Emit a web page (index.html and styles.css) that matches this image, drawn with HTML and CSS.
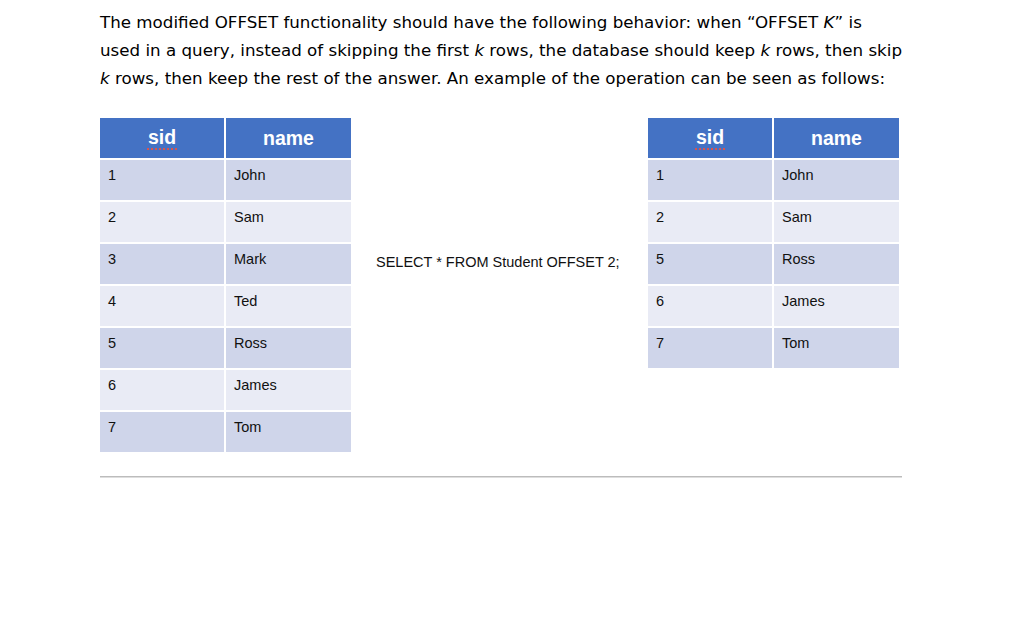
FILE: index.html
```html
<!DOCTYPE html>
<html>
<head>
<meta charset="utf-8">
<link rel="stylesheet" href="styles.css">
</head>
<body>
<div class="page">
  <p class="intro">The modified OFFSET functionality should have the following behavior: when “OFFSET <i>K</i>” is<br>used in a query, instead of skipping the first <i>k</i> rows, the database should keep <i>k</i> rows, then skip<br><i>k</i> rows, then keep the rest of the answer. An example of the operation can be seen as follows:</p>
  <div class="example">
    <div class="tbl">
      <div class="th"><span class="spell">sid</span></div><div class="th">name</div>
      <div class="td odd">1</div><div class="td odd">John</div>
      <div class="td even">2</div><div class="td even">Sam</div>
      <div class="td odd">3</div><div class="td odd">Mark</div>
      <div class="td even">4</div><div class="td even">Ted</div>
      <div class="td odd">5</div><div class="td odd">Ross</div>
      <div class="td even">6</div><div class="td even">James</div>
      <div class="td odd">7</div><div class="td odd">Tom</div>
    </div>
    <div class="query">SELECT * FROM Student OFFSET 2;</div>
    <div class="tbl">
      <div class="th"><span class="spell">sid</span></div><div class="th">name</div>
      <div class="td odd">1</div><div class="td odd">John</div>
      <div class="td even">2</div><div class="td even">Sam</div>
      <div class="td odd">5</div><div class="td odd">Ross</div>
      <div class="td even">6</div><div class="td even">James</div>
      <div class="td odd">7</div><div class="td odd">Tom</div>
    </div>
  </div>
  <hr class="rule">
</div>
</body>
</html>
```

FILE: styles.css
```css
html, body {
  margin: 0;
  padding: 0;
  background: #ffffff;
}
.page {
  padding: 8px 0 0 100px;
  width: 802px;
}
.intro {
  margin: 0;
  font-family: "DejaVu Sans", Verdana, sans-serif;
  font-size: 16.7px;
  line-height: 28px;
  color: #000000;
  white-space: nowrap;
}
.intro i {
  font-style: italic;
}
.example {
  display: flex;
  align-items: flex-start;
  margin-top: 26px;
}
.tbl {
  display: grid;
  grid-template-columns: 124px 125px;
  grid-auto-rows: 40px;
  gap: 2px;
  width: 251px;
  flex: none;
  font-family: "Liberation Sans", Arial, sans-serif;
  font-size: 14.5px;
  color: #111111;
}
.tbl .td {
  height: 40px;
  box-sizing: border-box;
  padding: 7px 0 0 8px;
}
.th {
  background: #4472c4;
  color: #ffffff;
  font-weight: bold;
  font-size: 19.5px;
  display: flex;
  align-items: center;
  justify-content: center;
}
.spell {
  line-height: 20px;
  padding: 0 1px 1px;
  border-bottom: 2px dotted #d9534f;
}
.odd { background: #cfd5ea; }
.even { background: #e9ebf5; }
.query {
  flex: none;
  width: 297px;
  box-sizing: border-box;
  padding: 136px 0 0 25px;
  font-family: "Liberation Sans", Arial, sans-serif;
  font-size: 14.5px;
  color: #111111;
}
.rule {
  margin: 24px 0 0 0;
  width: 802px;
  border: 0;
  height: 1px;
  background: #bcbcbc;
  border-bottom: 1px solid #dedede;
}
```
